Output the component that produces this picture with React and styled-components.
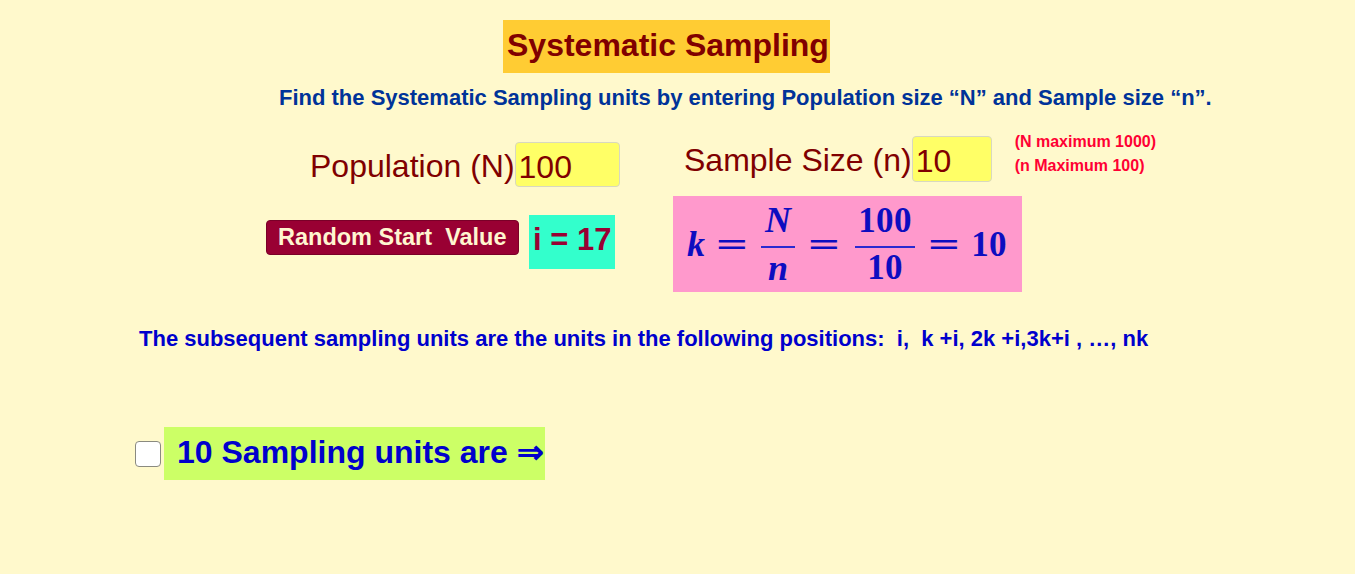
import React from "react";
import styled, { createGlobalStyle } from "styled-components";

const GlobalStyle = createGlobalStyle`
  body {
    margin: 0;
    background: #fff9cc;
  }
`;

const Page = styled.div`
  width: 1355px;
  height: 574px;
  overflow: hidden;
  background: #fff9cc;
  font-family: "Liberation Sans", Arial, sans-serif;
`;

const TitleRow = styled.div`
  display: flex;
  padding: 20px 0 0 503px;
`;

const Title = styled.h1`
  margin: 0;
  width: 327px;
  height: 53px;
  box-sizing: border-box;
  padding-left: 4px;
  background: #ffcc33;
  color: #800000;
  font-size: 32px;
  font-weight: bold;
  line-height: 50px;
  white-space: nowrap;
`;

const Intro = styled.p`
  margin: 12px 0 0 279px;
  color: #003399;
  font-size: 22px;
  font-weight: bold;
  line-height: 25px;
  white-space: nowrap;
`;

const Middle = styled.div`
  display: grid;
  grid-template-columns: 407px 1fr;
  padding-left: 266px;
`;

const Column = styled.div`
  display: flex;
  flex-direction: column;
  align-items: flex-start;
`;

const FieldRow = styled.div`
  display: flex;
  align-items: center;
  margin-top: ${(p) => p.top}px;
  padding-left: ${(p) => p.indent}px;
`;

const Label = styled.span`
  color: #800000;
  font-size: 32px;
  line-height: 36px;
  padding-top: ${(p) => p.drop || 0}px;
  white-space: nowrap;
`;

const NumberBox = styled.input`
  box-sizing: border-box;
  width: ${(p) => p.w}px;
  height: ${(p) => p.h}px;
  margin: 0;
  padding: 5px 0 0 3px;
  border: 1px solid #d8d8c0;
  border-radius: 4px;
  background: #ffff66;
  color: #800000;
  font-family: "Liberation Sans", Arial, sans-serif;
  font-size: 32px;
  outline: none;
`;

const Notes = styled.div`
  display: flex;
  flex-direction: column;
  align-self: flex-start;
  margin: -6px 0 0 23px;
  color: #ff0033;
  font-size: 16px;
  font-weight: bold;
  line-height: 24px;
  white-space: nowrap;
`;

const StartRow = styled.div`
  display: flex;
  align-items: flex-start;
  gap: 10px;
  margin-top: 28px;
`;

const StartButton = styled.button`
  margin: 5px 0 0;
  width: 253px;
  height: 35px;
  padding: 0 0 0 11px;
  border: 1px solid #7a0028;
  border-radius: 4px;
  background: #990033;
  color: #fff5d0;
  font-family: "Liberation Sans", Arial, sans-serif;
  font-size: 23.5px;
  font-weight: bold;
  text-align: left;
  white-space: pre;
  cursor: pointer;
`;

const StartValue = styled.div`
  box-sizing: border-box;
  width: 86px;
  height: 54px;
  padding-left: 4px;
  background: #33ffcc;
  color: #990033;
  font-size: 31px;
  font-weight: bold;
  line-height: 50px;
  white-space: nowrap;
`;

const Formula = styled.div`
  display: flex;
  align-items: center;
  box-sizing: border-box;
  width: 349px;
  height: 96px;
  margin-top: 14px;
  padding: 1px 0 0 13px;
  background: #ff99cc;
  color: #0d0dc0;
  font-family: "Liberation Serif", "Times New Roman", serif;
  font-size: 35px;
  font-weight: bold;
  line-height: 30px;
`;

const Term = styled.span`
  display: inline-block;
  width: ${(p) => p.w}px;
  margin-left: ${(p) => p.gap || 0}px;
  text-align: center;
  white-space: nowrap;
`;

const MathVar = styled.span`
  font-style: italic;
  font-size: 36px;
`;

const MathNum = styled.span`
  letter-spacing: 0.3px;
`;

const Equals = styled(Term)`
  font-size: 34px;
  transform: scaleX(1.65);
`;

const Fraction = styled(Term)`
  display: inline-flex;
  flex-direction: column;
  align-items: stretch;
`;

const Numerator = styled.span`
  padding-bottom: 10px;
  border-bottom: 2px solid #2a2ad0;
`;

const Denominator = styled.span`
  margin-top: 5px;
`;

const Sequence = styled.p`
  margin: 34px 0 0 139px;
  color: #0000cc;
  font-size: 22px;
  font-weight: bold;
  line-height: 25px;
  white-space: pre;
`;

const ResultRow = styled.label`
  display: flex;
  align-items: center;
  gap: 3px;
  margin: 76px 0 0 135px;
`;

const Check = styled.span`
  box-sizing: border-box;
  width: 26px;
  height: 26px;
  border: 1px solid #8a8a80;
  border-radius: 4px;
  background: #fff;
`;

const ResultLabel = styled.span`
  box-sizing: border-box;
  width: 381px;
  height: 53px;
  padding-left: 13px;
  background: #ccff66;
  color: #0000cc;
  font-size: 32px;
  font-weight: bold;
  line-height: 50px;
  white-space: nowrap;
`;

export default function App() {
  return (
    <Page>
      <GlobalStyle />
      <TitleRow>
        <Title>Systematic Sampling</Title>
      </TitleRow>
      <Intro>
        Find the Systematic Sampling units by entering Population size “N” and Sample size “n”.
      </Intro>

      <Middle>
        <Column>
          <FieldRow top={32} indent={44}>
            <Label drop={3}>Population (N)</Label>
            <NumberBox w={105} h={45} defaultValue="100" />
          </FieldRow>
          <StartRow>
            <StartButton>{"Random Start  Value"}</StartButton>
            <StartValue>i = 17</StartValue>
          </StartRow>
        </Column>

        <Column>
          <FieldRow top={26} indent={11}>
            <Label drop={2}>Sample Size (n)</Label>
            <NumberBox w={80} h={46} defaultValue="10" />
            <Notes>
              <span>(N maximum 1000)</span>
              <span>(n Maximum 100)</span>
            </Notes>
          </FieldRow>
          <Formula>
            <Term w={20}>
              <MathVar>k</MathVar>
            </Term>
            <Equals w={28} gap={12}>=</Equals>
            <Fraction w={34} gap={15}>
              <Numerator>
                <MathVar>N</MathVar>
              </Numerator>
              <Denominator>
                <MathVar>n</MathVar>
              </Denominator>
            </Fraction>
            <Equals w={28} gap={15}>=</Equals>
            <Fraction w={60} gap={17}>
              <Numerator>
                <MathNum>100</MathNum>
              </Numerator>
              <Denominator>
                <MathNum>10</MathNum>
              </Denominator>
            </Fraction>
            <Equals w={28} gap={15}>=</Equals>
            <Term w={36} gap={13}>
              <MathNum>10</MathNum>
            </Term>
          </Formula>
        </Column>
      </Middle>

      <Sequence>
        {"The subsequent sampling units are the units in the following positions:  i,  k +i, 2k +i,3k+i , …, nk"}
      </Sequence>

      <ResultRow>
        <Check />
        <ResultLabel>10 Sampling units are ⇒</ResultLabel>
      </ResultRow>
    </Page>
  );
}
